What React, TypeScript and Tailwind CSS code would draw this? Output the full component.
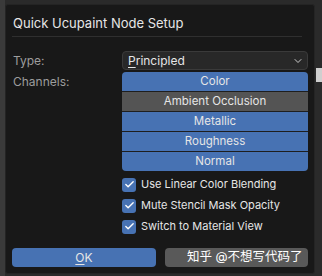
import { Check, ChevronDown } from "lucide-react";

const channels = [
  { name: "Color", on: true },
  { name: "Ambient Occlusion", on: false },
  { name: "Metallic", on: true },
  { name: "Roughness", on: true },
  { name: "Normal", on: true },
];

const options = ["Use Linear Color Blending", "Mute Stencil Mask Opacity", "Switch to Material View"];

function Box({ label }: { label: string }) {
  return (
    <div className="flex items-center gap-[5px] h-[21px]">
      <span className="w-[14px] h-[14px] rounded-[3px] bg-[#4772b3] flex items-center justify-center">
        <Check className="w-[11px] h-[11px] text-white" strokeWidth={3} />
      </span>
      <span className="text-[11px] text-[#e6e6e6]">{label}</span>
    </div>
  );
}

export default function App() {
  return (
    <div
      className="w-[322px] h-[276px] bg-[#2a2a2a] overflow-hidden relative"
      style={{ fontFamily: "Inter, 'Noto Sans', 'Noto Sans CJK SC', sans-serif" }}
    >
      {/* background editor bits */}
      <div className="absolute left-[0px] top-[0px] w-[5px] h-[276px] bg-[#3a3a3a]" />
      <div className="absolute left-[316px] top-[68px] w-[6px] h-[14px] bg-[#cfcfcf]" />

      <div className="pt-[4px] pl-[5px]">
        <div className="relative w-[310px] h-[270px] bg-[#181818] rounded-[3px] border border-[#242424] px-[6px]">
          <div className="h-[31px] flex items-end pb-[3px] text-[13px] text-[#e6e6e6] pl-[1px]">Quick Ucupaint Node Setup</div>
          <div className="h-px bg-[#2f2f2f] mr-[6px]" />

          <div className="flex mt-[14px]">
            <div className="w-[110px] pl-[1px] text-[12px] text-[#9d9d9d] flex flex-col">
              <span className="h-[20px] leading-[20px]">Type:</span>
              <span className="h-[20px] leading-[20px] mt-[1px]">Channels:</span>
            </div>
            <div className="flex-1 flex flex-col">
              <div className="h-[19px] rounded-[4px] bg-[#282828] border border-[#3a3a3a] flex items-center pl-[5px] pr-[3px] text-[12px] text-[#e6e6e6]">
                <span className="flex-1">
                  <span className="underline underline-offset-2">P</span>rincipled
                </span>
                <ChevronDown className="w-[12px] h-[12px] text-[#cccccc]" />
              </div>
              <div className="mt-[2px] rounded-[4px] overflow-hidden flex flex-col gap-px bg-[#1e1e1e]">
                {channels.map((c) => (
                  <div
                    key={c.name}
                    className={`h-[19px] flex items-center justify-center text-[11.5px] text-[#e6e6e6] ${c.on ? "bg-[#4772b3]" : "bg-[#545454]"}`}
                  >
                    {c.name}
                  </div>
                ))}
              </div>
              <div className="mt-[3px] flex flex-col">
                {options.map((o) => (
                  <Box key={o} label={o} />
                ))}
              </div>
            </div>
          </div>

          <div className="flex gap-[9px] mt-[11px]">
            <div className="w-[145px] h-[19px] rounded-[4px] bg-[#4772b3] flex items-center justify-center text-[12px] text-[#e6e6e6]">
              <span>
                <span className="underline underline-offset-2">O</span>K
              </span>
            </div>
            <div className="w-[144px] h-[19px] rounded-[4px] bg-[#595959] flex items-center pl-[22px] text-[12.5px] text-white whitespace-nowrap">
              知乎 @不想写代码了
            </div>
          </div>
        </div>
      </div>
    </div>
  );
}
